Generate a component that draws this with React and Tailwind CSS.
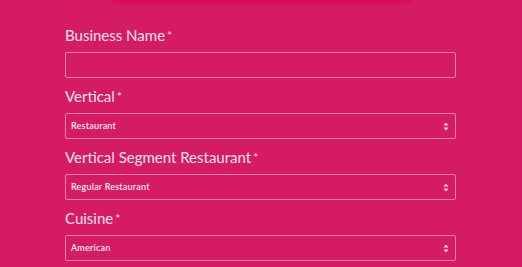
const fields = [
  { label: "Vertical", value: "Restaurant" },
  { label: "Vertical Segment Restaurant", value: "Regular Restaurant" },
  { label: "Cuisine", value: "American" },
];

const Arrows = () => (
  <svg width="6" height="9" viewBox="0 0 6 9" className="text-[#fbd9e6]">
    <path d="M3 0.5 L5.5 3.5 H0.5 Z" fill="currentColor" />
    <path d="M3 8.5 L5.5 5.5 H0.5 Z" fill="currentColor" />
  </svg>
);

const Label = ({ children }) => (
  <label className="block h-5 leading-5 text-[15px] text-[#fde3ee] mb-[7px]">
    {children}
    <span className="text-[12px] align-top relative top-[1px] ml-[2px]">*</span>
  </label>
);

export default function App() {
  return (
    <div
      className="w-[522px] h-[267px] overflow-hidden bg-[#d41b63]"
      style={{ fontFamily: "Lato, 'Open Sans', sans-serif" }}
    >
      <div className="ml-[112px] w-[298px] h-[2px] bg-[#dc0865] shadow-[0_1px_4px_rgba(200,0,80,0.6)]" />
      <div className="ml-[65px] w-[391px] pt-[23px]">
        <div className="mb-2">
          <Label>Business Name</Label>
          <div className="h-[26px] border border-[#f283ad] rounded-[2px]" />
        </div>
        {fields.map((f) => (
          <div key={f.label} className="mb-2">
            <Label>{f.label}</Label>
            <div className="h-[26px] border border-[#f283ad] rounded-[2px] flex items-center justify-between pl-[5px] pr-[6px]">
              <span className="text-[9px] font-semibold text-[#fdeaf1] tracking-[0.2px]">
                {f.value}
              </span>
              <Arrows />
            </div>
          </div>
        ))}
      </div>
    </div>
  );
}
